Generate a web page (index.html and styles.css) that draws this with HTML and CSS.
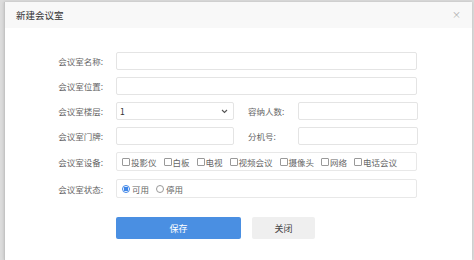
FILE: index.html
```html
<!DOCTYPE html>
<html lang="zh-CN">
<head>
  <meta charset="UTF-8">
  <title>新建会议室</title>
  <link rel="stylesheet" href="styles.css">
</head>
<body>
  <div class="dialog">
    <div class="dialog-header">
      <span class="dialog-title">新建会议室</span>
      <span class="dialog-close">&times;</span>
    </div>

    <div class="dialog-body">
      <div class="form-row">
        <label class="label">会议室名称:</label>
        <input type="text" class="field field-wide">
      </div>
      <div class="form-row">
        <label class="label">会议室位置:</label>
        <input type="text" class="field field-wide">
      </div>
      <div class="form-row">
        <label class="label">会议室楼层:</label>
        <div class="select">
          <span>1</span>
          <svg width="7" height="5" viewBox="0 0 7 5"><path d="M1 1l2.5 2.5L6 1" fill="none" stroke="#555" stroke-width="1.1"/></svg>
        </div>
        <label class="label-side">容纳人数:</label>
        <input type="text" class="field field-side">
      </div>
      <div class="form-row">
        <label class="label">会议室门牌:</label>
        <input type="text" class="field field-half">
        <label class="label-side">分机号:</label>
        <input type="text" class="field field-side">
      </div>
      <div class="form-row row-box">
        <label class="label">会议室设备:</label>
        <div class="box">
          <span class="check"><i class="checkbox"></i>投影仪</span>
          <span class="check"><i class="checkbox"></i>白板</span>
          <span class="check"><i class="checkbox"></i>电视</span>
          <span class="check"><i class="checkbox"></i>视频会议</span>
          <span class="check"><i class="checkbox"></i>摄像头</span>
          <span class="check"><i class="checkbox"></i>网络</span>
          <span class="check"><i class="checkbox"></i>电话会议</span>
        </div>
      </div>
      <div class="form-row row-box">
        <label class="label">会议室状态:</label>
        <div class="box">
          <span class="check"><i class="radio checked"></i>可用</span>
          <span class="check"><i class="radio"></i>停用</span>
        </div>
      </div>

      <div class="actions">
        <button class="btn btn-primary">保存</button>
        <button class="btn btn-default">关闭</button>
      </div>
    </div>
  </div>
</body>
</html>
```

FILE: styles.css
```css
/* Page */
body {
  margin: 0;
  height: 260px;
  overflow: hidden;
  background: #dcdcdc;
  font-family: "Noto Sans CJK SC", "Liberation Sans", sans-serif;
  color: #555;
}

/* Dialog */
.dialog {
  margin: 2px 2px 0 4px;
  height: 258px;
  background: #fff;
  border-left: 1px solid #c4c4c4;
  box-shadow: 0 0 3px rgba(0, 0, 0, 0.15);
}

.dialog-header {
  height: 26px;
  background: #f8f8f8;
  display: flex;
  align-items: center;
  justify-content: space-between;
  padding: 0 11px 0 11px;
}

.dialog-title {
  font-size: 9.5px;
  color: #333;
}

.dialog-close {
  font-size: 9px;
  color: #aaa;
  margin-top: -2px;
}

/* Form */
.dialog-body {
  padding-top: 24px;
}

.form-row {
  display: flex;
  align-items: center;
  height: 18px;
  margin-bottom: 7px;
}

.form-row.row-box {
  height: 19px;
  margin-bottom: 8px;
}

.label {
  width: 98px;
  text-align: right;
  font-size: 8.5px;
  color: #666;
  margin-right: 13px;
}

.label-side {
  width: 50px;
  margin-left: 14px;
  font-size: 8.5px;
  color: #666;
}

.field {
  box-sizing: border-box;
  height: 18px;
  border: 1px solid #e4e4e4;
  border-radius: 2px;
  background: #fff;
  outline: none;
}

.field-wide { width: 301px; }
.field-half { width: 118px; }
.field-side { width: 120px; }

.select {
  box-sizing: border-box;
  width: 118px;
  height: 18px;
  border: 1px solid #e4e4e4;
  border-radius: 2px;
  display: flex;
  align-items: center;
  justify-content: space-between;
  padding: 0 5px 0 3px;
  font-size: 8.5px;
  color: #333;
}

.box {
  box-sizing: border-box;
  width: 301px;
  height: 19px;
  border: 1px solid #e8e8e8;
  border-radius: 2px;
  display: flex;
  align-items: center;
  padding-left: 5px;
  font-size: 8.5px;
  color: #666;
}

.check {
  display: flex;
  align-items: center;
  margin-right: 7px;
}

.checkbox {
  width: 6px;
  height: 6px;
  border: 1px solid #999;
  border-radius: 1px;
  margin-right: 1px;
}

.radio {
  width: 6px;
  height: 6px;
  border: 1px solid #999;
  border-radius: 50%;
  margin-right: 2px;
}

.radio.checked {
  border-color: #3f86e8;
  background: radial-gradient(circle, #3f86e8 55%, #fff 60%);
}

/* Buttons */
.actions {
  display: flex;
  padding-left: 111px;
  margin-top: 19px;
}

.btn {
  height: 22px;
  border: none;
  border-radius: 2px;
  font-family: inherit;
  font-size: 9px;
  padding: 0;
}

.btn-primary {
  width: 125px;
  background: #4a8fe2;
  color: #fff;
}

.btn-default {
  width: 63px;
  margin-left: 11px;
  background: #efefef;
  color: #444;
}
```
